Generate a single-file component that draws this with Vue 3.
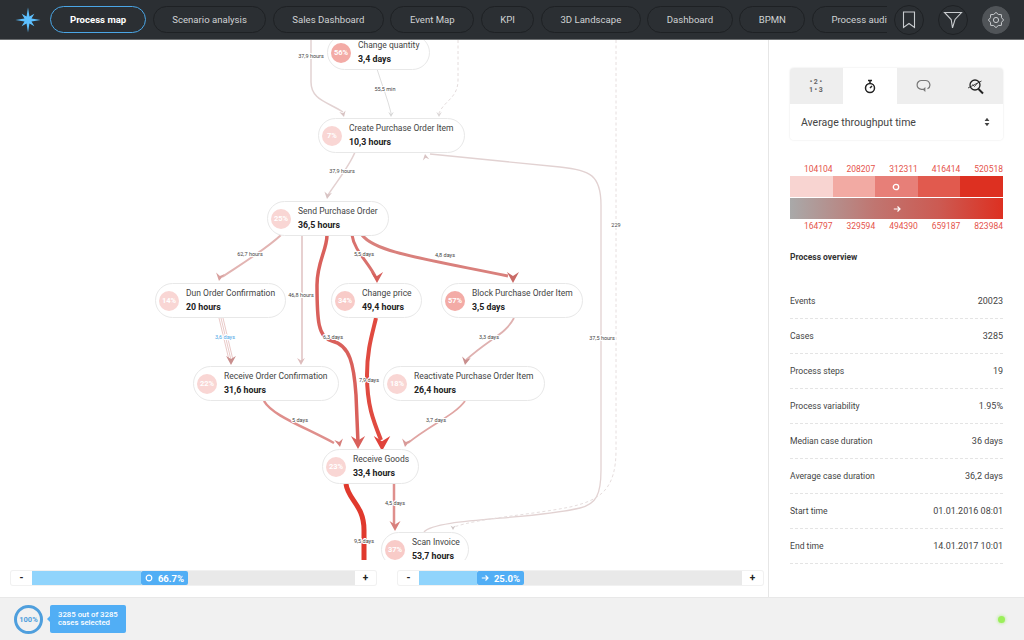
<template>
  <div class="app">
    <header class="topbar">
      <svg class="logo" width="26" height="26" viewBox="-13 -13 26 26">
        <polygon fill="#5cc0ff" :points="logoPoints" />
      </svg>
      <nav class="tabs">
        <div v-for="(tab, index) in tabs" :key="tab" class="tab" :class="{ active: index === 0 }">{{ tab }}</div>
      </nav>
      <div class="actions">
        <button class="round">
          <svg width="14" height="18" viewBox="0 0 14 18" fill="none" stroke="#c9cccf" stroke-width="1.1">
            <path d="M1.500 1h11v15.500L7 12.500l-5.500 4z" />
          </svg>
        </button>
        <button class="round">
          <svg width="20" height="18" viewBox="0 0 20 18" fill="none" stroke="#c9cccf" stroke-width="1.1">
            <path d="M1.500 1.500h17l-6.500 7-2.500 8.300-1.300-8.300z" />
          </svg>
        </button>
        <button class="round settings">
          <svg width="18" height="18" viewBox="-9 -9 18 18" fill="none" stroke="#c9cccf" stroke-width="1">
            <polygon :points="gearPoints" stroke-linejoin="round" />
            <circle r="2.600" />
          </svg>
        </button>
      </div>
    </header>

    <main class="main">
      <section class="left">
        <div class="canvas">
          <svg class="edges" width="768" height="520" viewBox="0 40 768 520" fill="none">
            <path v-for="edge in edges" :key="edge.d" :d="edge.d" :stroke="edge.color" :stroke-width="edge.width" :stroke-dasharray="edge.dash" />
            <polygon v-for="arrow in arrows" :key="arrow.points" :points="arrow.points" :fill="arrow.color" />
            <text
              v-for="label in labels"
              :key="label.text + label.x"
              class="edge-label"
              :class="{ blue: label.blue }"
              :x="label.x"
              :y="label.y"
              text-anchor="middle"
            >{{ label.text }}</text>
          </svg>
          <div
            v-for="node in nodes"
            :key="node.title"
            class="node"
            :style="{ left: node.x + 'px', top: node.y + 'px', width: node.w + 'px' }"
          >
            <span class="pct" :style="{ background: node.color }">{{ node.pct }}</span>
            <div class="node-text">
              <div class="node-title">{{ node.title }}</div>
              <div class="node-value">{{ node.value }}</div>
            </div>
          </div>
        </div>
        <div class="sliders">
          <div v-for="slider in sliders" :key="slider.value" class="slider">
            <span class="step">-</span>
            <div class="track">
              <div class="fill" :style="{ width: slider.fill + 'px' }"></div>
              <div class="handle">
                <svg v-if="slider.icon === 'circle'" width="8" height="8" viewBox="0 0 8 8" fill="none" stroke="#fff" stroke-width="1.200"><circle cx="4" cy="4" r="2.800" /></svg>
                <svg v-else width="8" height="8" viewBox="0 0 8 8" fill="none" stroke="#fff" stroke-width="1.200"><path d="M.8 4h6M4.500 1.500 7 4 4.500 6.500" /></svg>
                {{ slider.value }}
              </div>
            </div>
            <span class="step">+</span>
          </div>
        </div>
      </section>

      <aside class="side">
        <div class="metric-card">
          <div class="metric-tabs">
            <div class="metric-tab digits">
              <span>&#8226;2&#8226;</span>
              <span>1&#8226;3</span>
            </div>
            <div class="metric-tab selected">
              <svg width="14" height="15" viewBox="0 0 14 15" fill="none" stroke="#222" stroke-width="1.500">
                <circle cx="7" cy="9" r="4.500" />
                <path d="M5 1.500h4M7 1.500v3M7 9l2-2" />
              </svg>
            </div>
            <div class="metric-tab">
              <svg width="15" height="14" viewBox="0 0 15 14" fill="none" stroke="#777" stroke-width="1.200">
                <path d="M7.500 10.300H5.500a4.400 4.400 0 0 1 0-8.800h4a4.400 4.400 0 0 1 2 8.300" />
                <path d="M9.400 8v5l-2.800-2.500z" fill="#777" stroke="none" />
              </svg>
            </div>
            <div class="metric-tab">
              <svg width="18" height="17" viewBox="0 0 18 17" fill="none" stroke="#222" stroke-width="1.300">
                <circle cx="8" cy="7" r="5" />
                <path d="m11.500 11 4.500 4.500" stroke-width="2" />
                <path d="M1 10 14.500 3M5.500 6.500l2 2 3-3.500" stroke-width=".8" />
              </svg>
            </div>
          </div>
          <div class="metric-select">
            <span>Average throughput time</span>
            <svg width="6" height="10" viewBox="0 0 6 10" fill="#444"><path d="M3 .8 5.400 4H.6zM3 9.200.6 6h4.800z" /></svg>
          </div>
        </div>

        <div class="legend">
          <div class="legend-numbers">
            <span v-for="n in topNumbers" :key="n">{{ n }}</span>
          </div>
          <div class="legend-bar">
            <div v-for="(shade, index) in shades" :key="shade" class="shade" :style="{ background: shade }">
              <svg v-if="index === 2" width="8" height="8" viewBox="0 0 8 8" fill="none" stroke="#fff" stroke-width="1.300"><circle cx="4" cy="4" r="2.700" /></svg>
            </div>
          </div>
          <div class="legend-gradient">
            <svg width="8" height="8" viewBox="0 0 8 8" fill="none" stroke="#fff" stroke-width="1.200"><path d="M.8 4h6M4.500 1.500 7 4 4.500 6.500" /></svg>
          </div>
          <div class="legend-numbers">
            <span v-for="n in bottomNumbers" :key="n">{{ n }}</span>
          </div>
        </div>

        <h3 class="overview-title">Process overview</h3>
        <div class="overview">
          <div v-for="row in overview" :key="row.name" class="overview-row">
            <span class="row-name">{{ row.name }}</span>
            <span>{{ row.value }}</span>
          </div>
        </div>
      </aside>
    </main>

    <footer class="bottombar">
      <div class="ring">100%</div>
      <div class="selected-info">3285 out of 3285<br />cases selected</div>
      <span class="status"></span>
    </footer>
  </div>
</template>

<script setup>
const tabs = ['Process map', 'Scenario analysis', 'Sales Dashboard', 'Event Map', 'KPI', '3D Landscape', 'Dashboard', 'BPMN', 'Process audit']

// star shapes for the logo and the gear
const starPoints = (count, outer, inner) => {
  const points = []
  for (let i = 0; i < count * 2; i++) {
    const r = i % 2 ? inner : outer
    const a = (Math.PI * i) / count - Math.PI / 2
    points.push((r * Math.cos(a)).toFixed(2) + ',' + (r * Math.sin(a)).toFixed(2))
  }
  return points.join(' ')
}
const logoPoints = (() => {
  const points = []
  for (let i = 0; i < 16; i++) {
    const long = i % 4 === 0 ? 12.5 : 9
    const r = i % 2 ? 3.8 : long
    const a = (Math.PI * i) / 8 - Math.PI / 2
    points.push((r * Math.cos(a)).toFixed(2) + ',' + (r * Math.sin(a)).toFixed(2))
  }
  return points.join(' ')
})()
const gearPoints = starPoints(8, 7.6, 6)

const pale = '#f9d6d4'
const mid = '#f8cbc8'
const strong = '#f3aba6'

const nodes = [
  { title: 'Change quantity', value: '3,4 days', pct: '56%', color: strong, x: 327, y: -5, w: 103 },
  { title: 'Create Purchase Order Item', value: '10,3 hours', pct: '7%', color: pale, x: 318, y: 78, w: 147 },
  { title: 'Send Purchase Order', value: '36,5 hours', pct: '25%', color: pale, x: 267, y: 161, w: 122 },
  { title: 'Dun Order Confirmation', value: '20 hours', pct: '14%', color: pale, x: 155, y: 243, w: 131 },
  { title: 'Change price', value: '49,4 hours', pct: '34%', color: mid, x: 331, y: 243, w: 91 },
  { title: 'Block Purchase Order Item', value: '3,5 days', pct: '57%', color: strong, x: 441, y: 243, w: 142 },
  { title: 'Receive Order Confirmation', value: '31,6 hours', pct: '22%', color: pale, x: 193, y: 326, w: 146 },
  { title: 'Reactivate Purchase Order Item', value: '26,4 hours', pct: '18%', color: pale, x: 383, y: 326, w: 162 },
  { title: 'Receive Goods', value: '33,4 hours', pct: '23%', color: pale, x: 322, y: 409, w: 97 },
  { title: 'Scan Invoice', value: '53,7 hours', pct: '37%', color: mid, x: 381, y: 492, w: 88 }
]

const edges = [
  { d: 'M311 40V82C311 100 328 102 343 112', color: '#e2d2d2', width: 1.5 },
  { d: 'M377 69C382 85 388 100 391 113', color: '#dedede', width: 1 },
  { d: 'M458 40V80C458 98 445 100 439 113', color: '#e4dcdc', width: 1, dash: '3 2.500' },
  { d: 'M355 152C350 165 338 180 328 195', color: '#e3d0d0', width: 1.500 },
  { d: 'M281 235C265 250 240 265 222 277', color: '#e2b4b2', width: 2 },
  { d: 'M302 235V361', color: '#e7d0d0', width: 2 },
  { d: 'M327 235C327 250 317 262 317 285C317 320 318 338 332 341C350 345 354 365 356 395L358 443', color: '#d9605b', width: 3.500 },
  { d: 'M352 235C354 250 368 262 375 276', color: '#d9716d', width: 3 },
  { d: 'M362 235C375 252 420 258 508 276', color: '#d9807c', width: 3 },
  { d: 'M219 318 229 360', color: '#dfb1b0', width: .7 },
  { d: 'M221 318 231 360', color: '#dfb1b0', width: .7 },
  { d: 'M223 318 233 360', color: '#dfb1b0', width: .7 },
  { d: 'M264 401C272 415 300 425 334 443', color: '#df8f8c', width: 2.500 },
  { d: 'M376 318C372 335 367 350 367 375C367 405 373 420 381 440', color: '#e04a40', width: 4 },
  { d: 'M514 318C505 335 490 338 466 360', color: '#dfb1b0', width: 1.800 },
  { d: 'M465 401C455 415 430 425 408 443', color: '#e0a5a3', width: 1.800 },
  { d: 'M394 484V526', color: '#df8f8c', width: 2.500 },
  { d: 'M346 484C348 500 364 505 364 530V560', color: '#e0392d', width: 5 },
  { d: 'M424 532C435 518 530 520 580 508C596 504 601 495 601 470V205C601 175 590 170 560 167C520 163 470 158 430 154', color: '#e2d2d2', width: 1.300 },
  { d: 'M616 40V450C616 490 600 500 570 507C530 515 480 518 454 527', color: '#e6dede', width: 1, dash: '3 2.500' }
]

// barbed arrow head: tip position, direction in degrees (0 = down, positive = to the right), size
const head = (x, y, deg, size, color) => {
  const a = (deg * Math.PI) / 180
  const dir = [Math.sin(a), Math.cos(a)]
  const side = [Math.cos(a), -Math.sin(a)]
  const at = (back, across) => [x - dir[0] * back + side[0] * across, y - dir[1] * back + side[1] * across].map(v => v.toFixed(1)).join(',')
  return { color, points: [at(0, 0), at(size, size * 0.55), at(size * 0.65, 0), at(size, -size * 0.55)].join(' ') }
}

const arrows = [
  head(344, 117, 15, 6, '#d8c3c3'),
  head(391, 117, 0, 5, '#d6d6d6'),
  head(439, 117, 0, 5, '#dbd6d6'),
  head(327, 199, -10, 7, '#d8c3c3'),
  head(219, 281, -10, 8, '#d8a09e'),
  head(301, 365, 0, 7, '#ddbcbc'),
  head(358, 449, 0, 13, '#d9605b'),
  head(377, 283, 0, 11, '#d65f5b'),
  head(513, 283, 0, 11, '#c96a66'),
  head(231, 365, 0, 9, '#c98f8e'),
  head(340, 447, 10, 8, '#d67f7c'),
  head(382, 451, 0, 15, '#e0423a'),
  head(465, 365, -10, 8, '#c98f8e'),
  head(405, 447, -10, 8, '#d99a98'),
  head(395, 531, 0, 10, '#d87f7c'),
  head(425, 154, -170, 6, '#d8c3c3'),
  head(453, 530, 0, 4.500, '#cfc6c6')
]

const labels = [
  { text: '37,9 hours', x: 311, y: 58 },
  { text: '55,5 min', x: 385, y: 91 },
  { text: '37,9 hours', x: 342, y: 173 },
  { text: '62,7 hours', x: 250, y: 256 },
  { text: '46,8 hours', x: 301, y: 297 },
  { text: '5,5 days', x: 364, y: 256 },
  { text: '4,8 days', x: 445, y: 257 },
  { text: '6,3 days', x: 333, y: 339 },
  { text: '3,6 days', x: 225, y: 339, blue: true },
  { text: '3,3 days', x: 489, y: 339 },
  { text: '7,9 days', x: 369, y: 382 },
  { text: '5 days', x: 300, y: 422 },
  { text: '3,7 days', x: 436, y: 422 },
  { text: '4,5 days', x: 395, y: 505 },
  { text: '9,5 days', x: 364, y: 543 },
  { text: '37,5 hours', x: 602, y: 340 },
  { text: '229', x: 616, y: 227 }
]

const sliders = [
  { value: '66.7%', icon: 'circle', fill: 109 },
  { value: '25.0%', icon: 'arrow', fill: 58 }
]

const topNumbers = ['104104', '208207', '312311', '416414', '520518']
const bottomNumbers = ['164797', '329594', '494390', '659187', '823984']
const shades = ['#f8d4d1', '#f2aaa3', '#e77f78', '#e15a4e', '#dd3021']

const overview = [
  { name: 'Events', value: '20023' },
  { name: 'Cases', value: '3285' },
  { name: 'Process steps', value: '19' },
  { name: 'Process variability', value: '1.95%' },
  { name: 'Median case duration', value: '36 days' },
  { name: 'Average case duration', value: '36,2 days' },
  { name: 'Start time', value: '01.01.2016 08:01' },
  { name: 'End time', value: '14.01.2017 10:01' }
]
</script>

<style>
html, body {
  margin: 0;
  background: #fff;
}
</style>

<style scoped>
.app {
  width: 1024px;
  height: 640px;
  display: flex;
  flex-direction: column;
  overflow: hidden;
  font-family: Roboto, "Liberation Sans", sans-serif;
  color: #333;
}

/* Top bar */
.topbar {
  flex: 0 0 40px;
  box-sizing: border-box;
  display: flex;
  align-items: center;
  background: #2b2f33;
  border-bottom: 1px solid #6b6e70;
  padding-left: 15px;
}
.logo {
  flex: none;
  margin-right: 9px;
}
.tabs {
  width: 837px;
  flex: none;
  display: flex;
  gap: 6.5px;
  overflow: hidden;
}
.tab {
  flex: none;
  height: 27px;
  box-sizing: border-box;
  display: flex;
  align-items: center;
  padding: 0 18.5px;
  border: 1px solid #1e2124;
  border-radius: 14px;
  font-size: 9.6px;
  color: #d0d2d4;
}
.tab.active {
  padding: 0 19px;
  border: 1.5px solid #4aa6e6;
  font-weight: 700;
  color: #fff;
}
.actions {
  display: flex;
  align-items: center;
  gap: 14px;
  margin-left: 7px;
}
.round {
  width: 30px;
  height: 30px;
  padding: 0;
  display: flex;
  align-items: center;
  justify-content: center;
  background: transparent;
  border: 1px solid #1e2124;
  border-radius: 50%;
}
.settings {
  width: 28px;
  height: 28px;
  background: #505458;
  border-color: #505458;
}

/* Main area */
.main {
  flex: 1;
  display: flex;
  min-height: 0;
}
.left {
  width: 768px;
  flex: none;
  display: flex;
  flex-direction: column;
}
.canvas {
  position: relative;
  height: 520px;
  overflow: hidden;
}
.edges {
  position: absolute;
  left: 0;
  top: 0;
}
.edge-label {
  font-size: 5.5px;
  fill: #444;
  stroke: #fff;
  stroke-width: 2px;
  paint-order: stroke;
}
.edge-label.blue {
  fill: #4aa6e6;
}
.node {
  position: absolute;
  height: 35px;
  box-sizing: border-box;
  display: flex;
  align-items: center;
  gap: 7px;
  padding-left: 3px;
  background: #fff;
  border: 1px solid #e8e8e8;
  border-radius: 18px;
  white-space: nowrap;
}
.pct {
  flex: none;
  width: 20px;
  height: 20px;
  border-radius: 50%;
  display: flex;
  align-items: center;
  justify-content: center;
  font-size: 7.5px;
  font-weight: 700;
  color: #fff;
}
.node-text {
  margin-top: -2px;
}
.node-title {
  font-size: 8.5px;
  line-height: 14px;
  color: #444;
}
.node-value {
  font-size: 8.8px;
  line-height: 14px;
  font-weight: 700;
  color: #222;
}

/* Sliders under the map */
.sliders {
  flex: 1;
  display: flex;
  gap: 22px;
  padding: 11px 0 0 11px;
}
.slider {
  width: 365px;
  height: 14px;
  display: flex;
  background: #fff;
  box-shadow: 0 0 0 1px #f1f1f1;
  border-radius: 2px;
}
.step {
  flex: 0 0 21px;
  text-align: center;
  font-size: 10px;
  font-weight: 700;
  line-height: 14px;
  color: #222;
}
.track {
  flex: 1;
  display: flex;
  background: #e9e9e9;
}
.fill {
  background: #90d4fc;
}
.handle {
  width: 47px;
  box-sizing: border-box;
  display: flex;
  align-items: center;
  justify-content: center;
  gap: 5px;
  background: #51aef5;
  border-radius: 2px;
  font-size: 9.5px;
  font-weight: 700;
  color: #fff;
}

/* Right panel */
.side {
  width: 256px;
  box-sizing: border-box;
  padding: 28px 21px 0 21px;
  border-left: 1px solid #e6e6e6;
}
.metric-card {
  border-radius: 4px;
  box-shadow: 0 0 2px rgba(0, 0, 0, 0.12);
  overflow: hidden;
}
.metric-tabs {
  display: grid;
  grid-template-columns: repeat(4, 1fr);
  height: 36px;
  background: #eee;
}
.metric-tab {
  display: flex;
  align-items: center;
  justify-content: center;
}
.metric-tab.selected {
  background: #fff;
}
.digits {
  flex-direction: column;
  font-size: 7px;
  font-weight: 700;
  line-height: 8px;
  letter-spacing: 1.6px;
  color: #666;
}
.metric-select {
  height: 36px;
  display: flex;
  align-items: center;
  justify-content: space-between;
  padding: 0 13px 0 11px;
  background: #fff;
  font-size: 10.5px;
  color: #444;
}
.legend {
  margin-top: 23px;
}
.legend-numbers {
  display: grid;
  grid-template-columns: repeat(5, 1fr);
  height: 12px;
  text-align: right;
  font-size: 8.5px;
  line-height: 12px;
  color: #e5534b;
}
.legend-bar {
  display: grid;
  grid-template-columns: repeat(5, 1fr);
  height: 21px;
  margin-top: 1px;
}
.shade {
  display: flex;
  align-items: center;
  justify-content: center;
}
.legend-gradient {
  height: 21px;
  margin: 1px 0;
  display: flex;
  align-items: center;
  justify-content: center;
  background: linear-gradient(90deg, #a9a9a9, #c07570 40%, #cc5a52 70%, #dd3021);
}
.overview-title {
  margin: 19px 0 0;
  font-size: 8.5px;
  line-height: 12px;
  font-weight: 700;
  color: #333;
}
.overview {
  margin-top: 21px;
}
.overview-row {
  height: 35px;
  box-sizing: border-box;
  display: flex;
  align-items: center;
  justify-content: space-between;
  border-bottom: 1px dashed #e4e4e4;
  font-size: 9px;
  color: #444;
}
.row-name {
  font-size: 8.6px;
}

/* Bottom bar */
.bottombar {
  flex: 0 0 43px;
  box-sizing: border-box;
  display: flex;
  align-items: center;
  padding: 0 19.5px 0 14px;
  background: #f1f1f1;
  border-top: 1px solid #e8e8e8;
}
.ring {
  width: 29px;
  height: 29px;
  box-sizing: border-box;
  display: flex;
  align-items: center;
  justify-content: center;
  border: 3.5px solid #4f9fdd;
  border-radius: 50%;
  font-size: 7.5px;
  font-weight: 700;
  color: #4f9fdd;
}
.selected-info {
  position: relative;
  margin-left: 7px;
  width: 76px;
  height: 28px;
  box-sizing: border-box;
  padding: 6px 0 0 8px;
  background: #51aef5;
  border-radius: 2px;
  font-size: 7.8px;
  line-height: 8px;
  font-weight: 500;
  white-space: nowrap;
  color: #fff;
}
.selected-info::before {
  content: "";
  position: absolute;
  left: -3px;
  top: 11px;
  border: 3px solid transparent;
  border-left: 0;
  border-right-color: #51aef5;
}
.status {
  width: 7px;
  height: 7px;
  margin-left: auto;
  background: #9bef5a;
  border-radius: 50%;
  box-shadow: 0 0 3px 1px #c9eeb0;
}
</style>
